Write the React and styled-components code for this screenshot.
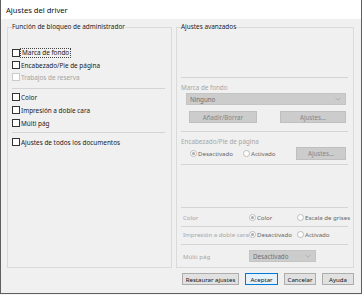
import React from "react";
import styled, { createGlobalStyle } from "styled-components";

const GlobalStyle = createGlobalStyle`
  html, body {
    margin: 0;
    padding: 0;
  }
  body {
    background: #f4f4f4;
    font-family: "Noto Sans", "Liberation Sans", sans-serif;
  }
  * {
    box-sizing: border-box;
  }
`;

const Window = styled.div`
  width: 362px;
  height: 294px;
  border: 1px solid #5f5f5f;
  border-top: none;
  background: #f0f0f0;
  display: flex;
  flex-direction: column;
`;

const TitleBar = styled.div`
  flex: none;
  height: 19px;
  background: #fff;
  padding-left: 5px;
  display: flex;
  align-items: center;
  font-size: 7.6px;
  color: #111;
`;

const Body = styled.div`
  flex: 1;
  padding: 3px 7px 8px 6px;
  display: flex;
  flex-direction: column;
`;

const Groups = styled.div`
  display: flex;
  gap: 4px;
  height: 246px;
`;

const Group = styled.fieldset`
  margin: 0;
  min-width: 0;
  width: ${(p) => p.$width}px;
  height: 246px;
  border: 1px solid #dadada;
  padding: 0 ${(p) => p.$padRight}px 0 4px;
  display: flex;
  flex-direction: column;
`;

const Legend = styled.legend`
  padding: 0;
  font-size: 6.4px;
  line-height: 10px;
  color: #1a1a1a;
`;

const Stack = styled.div`
  display: flex;
  flex-direction: column;
  gap: ${(p) => p.$gap || 0}px;
  margin-top: ${(p) => p.$top || 0}px;
`;

const CheckRow = styled.label`
  height: 12px;
  display: flex;
  align-items: center;
  gap: 1px;
  font-size: 6.4px;
  color: ${(p) => (p.$disabled ? "#a3a3a3" : "#1a1a1a")};
  white-space: nowrap;
`;

const Box = styled.span`
  width: 8px;
  height: 8px;
  flex: none;
  background: #fff;
  border: 1px solid ${(p) => (p.$disabled ? "#cacaca" : "#333")};
`;

const FocusText = styled.span`
  outline: 1px dotted #444;
  padding: 0 1px;
  line-height: 8px;
`;

const Separator = styled.div`
  height: 0;
  border-top: 1px solid #d4d4d4;
  margin-top: ${(p) => p.$top || 0}px;
  margin-bottom: ${(p) => p.$bottom || 0}px;
`;

const FieldLabel = styled.div`
  height: 10px;
  line-height: 10px;
  font-size: 6.3px;
  color: #a6a6a6;
  margin-top: ${(p) => p.$top || 0}px;
`;

const Select = styled.div`
  height: 12px;
  width: ${(p) => (p.$width ? `${p.$width}px` : "auto")};
  margin: ${(p) => (p.$width ? "0" : "0 2px 0 5px")};
  background: #cccccc;
  border: 1px solid #c4c4c4;
  padding: 0 4px 0 3px;
  display: flex;
  align-items: center;
  justify-content: space-between;
  font-size: 6.2px;
  color: #6e6e6e;
`;

const DisabledButton = styled.div`
  height: ${(p) => p.$h || 12}px;
  width: ${(p) => p.$w}px;
  background: #cccccc;
  border: 1px solid #bfbfbf;
  display: flex;
  align-items: center;
  justify-content: center;
  font-size: 6.2px;
  color: #858585;
  margin-left: ${(p) => (p.$push ? "auto" : "0")};
`;

const ButtonPair = styled.div`
  display: flex;
  justify-content: space-between;
  margin-top: 6px;
  padding: 0 2px 0 8px;
`;

const RadioRow = styled.div`
  height: 13px;
  display: flex;
  align-items: center;
  padding: 0 2px 0 9px;
`;

const RadioOption = styled.span`
  display: flex;
  align-items: center;
  gap: 1px;
  width: ${(p) => (p.$w ? `${p.$w}px` : "auto")};
  font-size: 6.1px;
  color: #666;
  white-space: nowrap;
`;

const Circle = styled.span`
  width: 7px;
  height: 7px;
  flex: none;
  border-radius: 50%;
  border: 1px solid #bdbdbd;
  background: #fff;
  display: flex;
  align-items: center;
  justify-content: center;

  &::after {
    content: "";
    width: 3px;
    height: 3px;
    border-radius: 50%;
    background: ${(p) => (p.$checked ? "#aaaaaa" : "transparent")};
  }
`;

const OptionRow = styled.div`
  height: 12px;
  margin-top: ${(p) => p.$top || 0}px;
  padding-left: 2px;
  display: grid;
  grid-template-columns: 66px 48px auto;
  align-items: center;
  font-size: 6.1px;
  color: #a6a6a6;
  white-space: nowrap;
`;

const Footer = styled.div`
  display: flex;
  justify-content: flex-end;
  gap: 6px;
  margin-top: 5px;
`;

const Button = styled.button`
  height: 12px;
  width: ${(p) => p.$w}px;
  padding: 0;
  font-family: inherit;
  font-size: 6.1px;
  color: #111;
  background: ${(p) => (p.$primary ? "#e5f1fb" : "#e1e1e1")};
  border: 1px solid ${(p) => (p.$primary ? "#0078d7" : "#adadad")};
`;

const Chevron = () => (
  <svg width="6" height="4" viewBox="0 0 6 4">
    <path d="M0.5 0.8 L3 3.2 L5.5 0.8" fill="none" stroke="#a8a8a8" strokeWidth="0.8" />
  </svg>
);

function Check({ children, disabled, focused }) {
  return (
    <CheckRow $disabled={disabled}>
      <Box $disabled={disabled} />
      {focused ? <FocusText>{children}</FocusText> : children}
    </CheckRow>
  );
}

function Radio({ children, checked, w }) {
  return (
    <RadioOption $w={w}>
      <Circle $checked={checked} />
      {children}
    </RadioOption>
  );
}

export default function App() {
  return (
    <>
      <GlobalStyle />
      <Window>
        <TitleBar>Ajustes del driver</TitleBar>
        <Body>
          <Groups>
            <Group $width={165} $padRight={6}>
              <Legend>Función de bloqueo de administrador</Legend>
              <Stack $top={15}>
                <Check focused>Marca de fondo</Check>
                <Check>Encabezado/Pie de página</Check>
                <Check disabled>Trabajos de reserva</Check>
              </Stack>
              <Separator $top={5} $bottom={2} />
              <Stack $gap={1}>
                <Check>Color</Check>
                <Check>Impresión a doble cara</Check>
                <Check>Múlti pág</Check>
              </Stack>
              <Separator $top={3} $bottom={3} />
              <Check>Ajustes de todos los documentos</Check>
            </Group>

            <Group $width={178} $padRight={5}>
              <Legend>Ajustes avanzados</Legend>
              <Separator $top={45} />
              <FieldLabel $top={5}>Marca de fondo</FieldLabel>
              <Select>
                Ninguno
                <Chevron />
              </Select>
              <ButtonPair>
                <DisabledButton $w={68}>Añadir/Borrar</DisabledButton>
                <DisabledButton $w={66}>Ajustes...</DisabledButton>
              </ButtonPair>
              <Separator $top={8} />
              <FieldLabel $top={5}>Encabezado/Pie de página</FieldLabel>
              <RadioRow>
                <Radio checked w={53}>Desactivado</Radio>
                <Radio>Activado</Radio>
                <DisabledButton $w={50} $h={13} $push>
                  Ajustes...
                </DisabledButton>
              </RadioRow>
              <Separator $top={4} />
              <Separator $top={42} />
              <OptionRow $top={3}>
                <span>Color</span>
                <Radio checked>Color</Radio>
                <Radio>Escala de grises</Radio>
              </OptionRow>
              <Separator $top={3} />
              <OptionRow $top={1}>
                <span>Impresión a doble cara</span>
                <Radio checked>Desactivado</Radio>
                <Radio>Activado</Radio>
              </OptionRow>
              <Separator $top={4} />
              <OptionRow $top={5}>
                <span>Múlti pág</span>
                <Select $width={67}>
                  Desactivado
                  <Chevron />
                </Select>
              </OptionRow>
            </Group>
          </Groups>
          <Footer>
            <Button $w={57}>Restaurar ajustes</Button>
            <Button $w={33} $primary>
              Aceptar
            </Button>
            <Button $w={32}>Cancelar</Button>
            <Button $w={32}>Ayuda</Button>
          </Footer>
        </Body>
      </Window>
    </>
  );
}
